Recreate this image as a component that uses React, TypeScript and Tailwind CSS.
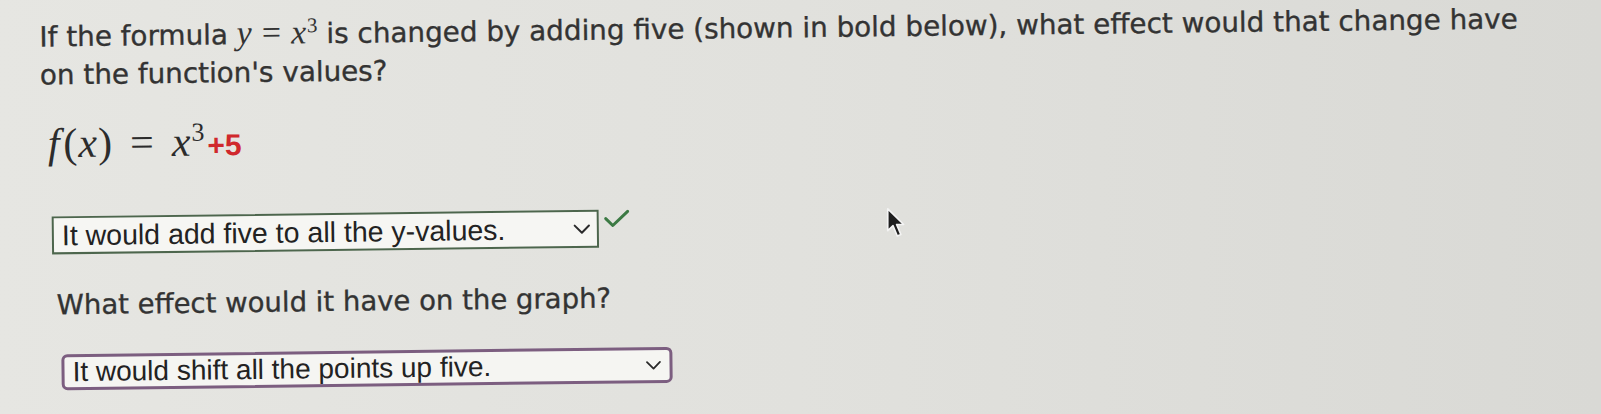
import React from 'react';

// Small select-like box used for the answer dropdowns
const Chevron: React.FC<{ className?: string }> = ({ className }) => (
  <svg viewBox="0 0 16 10" className={className} fill="none" stroke="#2a2a2a" strokeWidth={1.8} strokeLinecap="round" strokeLinejoin="round">
    <path d="M1.5 1.5 L8 8 L14.5 1.5" />
  </svg>
);

const Cursor: React.FC = () => (
  <svg viewBox="0 0 17 27" className="absolute left-[886px] top-[207px] h-[32px] w-[20px]">
    <path
      d="M1.5 1.5 L1.5 20 L6 15.8 L9.6 24.5 L12.6 23.2 L9 14.8 L15 14.8 Z"
      fill="#1e1e1e"
      stroke="#f4f4f4"
      strokeWidth={1.4}
      strokeLinejoin="round"
    />
  </svg>
);

export default function App() {
  return (
    <div className="relative h-[414px] w-[1601px] overflow-hidden bg-gradient-to-r from-[#e6e6e2] via-[#e1e1dd] to-[#d9d9d5]">
      <div className="origin-top-left -rotate-[0.7deg] pl-[39px] pt-[19px] text-[#333333] [font-family:'DejaVu_Sans',sans-serif]">
        <p className="whitespace-nowrap text-[27.8px] leading-[38px] [-webkit-text-stroke:0.35px_#333333]">
          If the formula{' '}
          <span className="text-[34px] leading-none [-webkit-text-stroke:0] [font-family:'Liberation_Serif',serif]">
            <i>y</i>
            <span className="mx-[10px]">=</span>
            <i>x</i>
            <sup className="relative -top-[11px] ml-[1px] text-[21px]">3</sup>
          </span>{' '}
          is changed by adding five (shown in bold below), what effect would that change have
          <br />
          on the function's values?
        </p>

        <div className="ml-[7px] mt-[25px] flex items-baseline text-[42px] leading-[48px] text-[#2c2c2c] [font-family:'Liberation_Serif',serif]">
          <i>f</i>
          <span className="ml-[4px]">(</span>
          <i className="mx-[1px]">x</i>
          <span>)</span>
          <span className="mx-[18px]">=</span>
          <i>x</i>
          <sup className="relative -top-[15px] ml-[1px] text-[26px]">3</sup>
          <span className="ml-[3px] text-[30px] font-bold text-[#d0282c] [font-family:'Liberation_Sans',sans-serif]">+5</span>
        </div>

        <div className="ml-[10px] mt-[45px] flex items-center">
          <div className="flex h-[38px] w-[547px] items-center justify-between border-2 border-[#4d664d] bg-[#f6f6f3] pl-[8px] pr-[6px] text-[28.5px] text-[#222222] [font-family:'Liberation_Sans',sans-serif]">
            <span>It would add five to all the y-values.</span>
            <Chevron className="h-[11px] w-[18px]" />
          </div>
          <svg viewBox="0 0 26 18" className="-mt-[20px] ml-[5px] h-[18px] w-[26px]" fill="none" stroke="#3c7a44" strokeWidth={3} strokeLinecap="round" strokeLinejoin="round">
            <path d="M2 9 L9 16 L24 2" />
          </svg>
        </div>

        <p className="ml-[14px] mt-[31px] text-[27.5px] leading-[38px] [-webkit-text-stroke:0.35px_#333333]">What effect would it have on the graph?</p>

        <div className="ml-[18px] mt-[31px] flex h-[36px] w-[611px] items-center justify-between rounded-[6px] border-[3px] border-[#7c5e80] bg-[#f5f5f2] pl-[8px] pr-[8px] text-[28px] text-[#222222] [font-family:'Liberation_Sans',sans-serif]">
          <span>It would shift all the points up five.</span>
          <Chevron className="h-[11px] w-[16px]" />
        </div>
      </div>
      <Cursor />
    </div>
  );
}
